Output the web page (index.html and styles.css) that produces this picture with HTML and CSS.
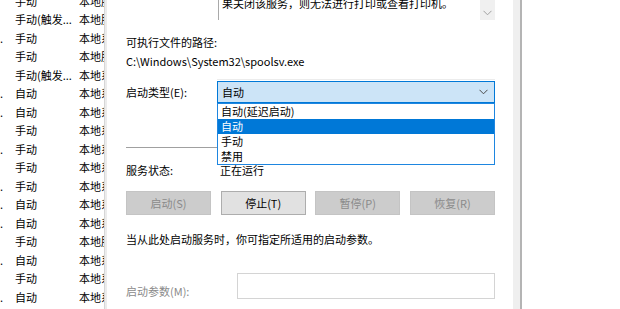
FILE: index.html
```html
<!DOCTYPE html>
<html lang="zh-CN">
<head>
<meta charset="utf-8">
<link rel="stylesheet" href="styles.css">
</head>
<body>
<div class="screen">
  <div class="list">
    <div class="rows">
      <div class="row"><span class="dot"></span><span class="st">手动</span><span class="who">本地服务</span></div>
      <div class="row"><span class="dot"></span><span class="st">手动(触发...</span><span class="who">本地服务</span></div>
      <div class="row"><span class="dot">.</span><span class="st">手动</span><span class="who">本地系统</span></div>
      <div class="row"><span class="dot"></span><span class="st">手动</span><span class="who">本地服务</span></div>
      <div class="row"><span class="dot"></span><span class="st">手动(触发...</span><span class="who">本地系统</span></div>
      <div class="row"><span class="dot">.</span><span class="st">自动</span><span class="who">本地系统</span></div>
      <div class="row"><span class="dot">.</span><span class="st">自动</span><span class="who">本地系统</span></div>
      <div class="row"><span class="dot"></span><span class="st">手动</span><span class="who">本地系统</span></div>
      <div class="row"><span class="dot">.</span><span class="st">手动</span><span class="who">本地系统</span></div>
      <div class="row"><span class="dot"></span><span class="st">手动</span><span class="who">本地系统</span></div>
      <div class="row"><span class="dot">.</span><span class="st">手动</span><span class="who">本地系统</span></div>
      <div class="row"><span class="dot">.</span><span class="st">自动</span><span class="who">本地系统</span></div>
      <div class="row"><span class="dot">.</span><span class="st">自动</span><span class="who">本地系统</span></div>
      <div class="row"><span class="dot"></span><span class="st">手动</span><span class="who">本地服务</span></div>
      <div class="row"><span class="dot">.</span><span class="st">自动</span><span class="who">本地系统</span></div>
      <div class="row"><span class="dot"></span><span class="st">手动</span><span class="who">本地系统</span></div>
      <div class="row"><span class="dot">.</span><span class="st">自动</span><span class="who">本地系统</span></div>
    </div>
  </div>
  <div class="edge-left"></div>
  <div class="dialog">
    <div class="desc">
      <div class="desc-text">果关闭该服务，则无法进行打印或查看打印机。</div>
      <div class="desc-scroll">
        <svg width="9" height="6" viewBox="0 0 9 6"><path d="M0.5 0.8 L4.5 4.8 L8.5 0.8" fill="none" stroke="#a0a0a0" stroke-width="1"/></svg>
      </div>
    </div>
    <div class="label path-label">可执行文件的路径:</div>
    <div class="label path">C:\Windows\System32\spoolsv.exe</div>
    <div class="faint"></div>
    <div class="combo-row">
      <div class="combo-label">启动类型(E):</div>
      <div class="combo-wrap">
        <div class="combo">
          <span>自动</span>
          <svg width="9" height="6" viewBox="0 0 9 6"><path d="M0.5 0.8 L4.5 4.8 L8.5 0.8" fill="none" stroke="#4a4a4a" stroke-width="1"/></svg>
        </div>
        <div class="dropdown">
          <div class="opt">自动(延迟启动)</div>
          <div class="opt sel">自动</div>
          <div class="opt">手动</div>
          <div class="opt">禁用</div>
        </div>
      </div>
    </div>
    <div class="sep"></div>
    <div class="status-row">
      <div class="status-label">服务状态:</div>
      <div>正在运行</div>
    </div>
    <div class="buttons">
      <div class="btn dis">启动(S)</div>
      <div class="btn">停止(T)</div>
      <div class="btn dis">暂停(P)</div>
      <div class="btn dis">恢复(R)</div>
    </div>
    <div class="hint">当从此处启动服务时，你可指定所适用的启动参数。</div>
    <div class="param-row">
      <div class="param-label">启动参数(M):</div>
      <div class="param-input"></div>
    </div>
  </div>
  <div class="edge-right"></div>
  <div class="blank"></div>
</div>
</body>
</html>
```
FILE: styles.css
```css
html, body {
  margin: 0;
  padding: 0;
  background: #fff;
}
body {
  width: 620px;
  height: 309px;
  overflow: hidden;
  font-family: "Noto Sans CJK SC", "Noto Sans", sans-serif;
  font-size: 11px;
  color: #000;
}
.screen {
  display: flex;
  width: 620px;
  height: 309px;
  overflow: hidden;
}
.list {
  width: 104px;
  flex: none;
  overflow: hidden;
}
.rows {
  margin-top: -8.25px;
}
.row {
  display: grid;
  grid-template-columns: 15px 64px 40px;
  height: 18.5px;
  line-height: 18.5px;
  white-space: nowrap;
}
.dot {
  overflow: hidden;
}
.st, .who {
  overflow: hidden;
}
.edge-left {
  flex: none;
  width: 2px;
  border-left: 1px solid #d6d6d6;
  background: #ececec;
}
.dialog {
  flex: none;
  width: 369px;
  padding: 0 18px 0 19px;
  display: flex;
  flex-direction: column;
  background: #fff;
}
.desc {
  margin-left: 92px;
  height: 20px;
  border-left: 1px solid #a9a9a9;
  display: flex;
  overflow: hidden;
}
.desc-text {
  flex: 1;
  padding-left: 3px;
  margin-top: -5px;
  line-height: 16px;
  white-space: nowrap;
  overflow: hidden;
}
.desc-scroll {
  width: 15px;
  background: #f0f0f0;
  display: flex;
  align-items: center;
  justify-content: center;
  padding-top: 5px;
  box-sizing: border-box;
}
.label {
  line-height: 16px;
}
.path-label {
  margin-top: 14px;
}
.path {
  margin-top: 3px;
}
.faint {
  margin-top: 10px;
  margin-left: 91px;
  height: 1px;
  background: #ececec;
}
.combo-row {
  margin-top: 1px;
  display: flex;
  height: 22px;
  align-items: center;
}
.combo-label {
  width: 91px;
  flex: none;
}
.combo-wrap {
  position: relative;
  flex: 1;
  height: 22px;
}
.combo {
  box-sizing: border-box;
  height: 22px;
  border: 1px solid #0078d7;
  background: #cce4f7;
  display: flex;
  align-items: center;
  justify-content: space-between;
  padding: 0 6px 0 4px;
}
.dropdown {
  position: absolute;
  left: 0;
  right: 0;
  top: 22px;
  border: 1px solid #1e86e0;
  background: #fff;
  z-index: 2;
}
.opt {
  height: 15px;
  line-height: 15px;
  padding-left: 3px;
}
.opt.sel {
  background: #0078d7;
  color: #fff;
}
.sep {
  margin-top: 44px;
  height: 1px;
  background: #a0a0a0;
}
.status-row {
  margin-top: 14px;
  display: flex;
  line-height: 16px;
}
.status-label {
  width: 94px;
  flex: none;
}
.buttons {
  margin-top: 13px;
  display: flex;
  justify-content: space-between;
}
.btn {
  box-sizing: border-box;
  width: 85px;
  height: 24px;
  border: 1px solid #adadad;
  background: #e1e1e1;
  display: flex;
  align-items: center;
  justify-content: center;
}
.btn.dis {
  background: #cccccc;
  border-color: #c4c4c4;
  color: #8a8a8a;
}
.hint {
  margin-top: 16px;
  line-height: 16px;
}
.param-row {
  margin-top: 26px;
  display: flex;
}
.param-label {
  width: 111px;
  flex: none;
  padding-top: 10px;
  line-height: 16px;
  color: #8a8a8a;
}
.param-input {
  flex: 1;
  box-sizing: border-box;
  height: 26px;
  border: 1px solid #d4d4d4;
  background: #fff;
}
.edge-right {
  flex: none;
  width: 7px;
  background: #efefef;
  border-right: 2px solid #b4b4b4;
}
.blank {
  flex: 1;
  background: #fff;
}
```
